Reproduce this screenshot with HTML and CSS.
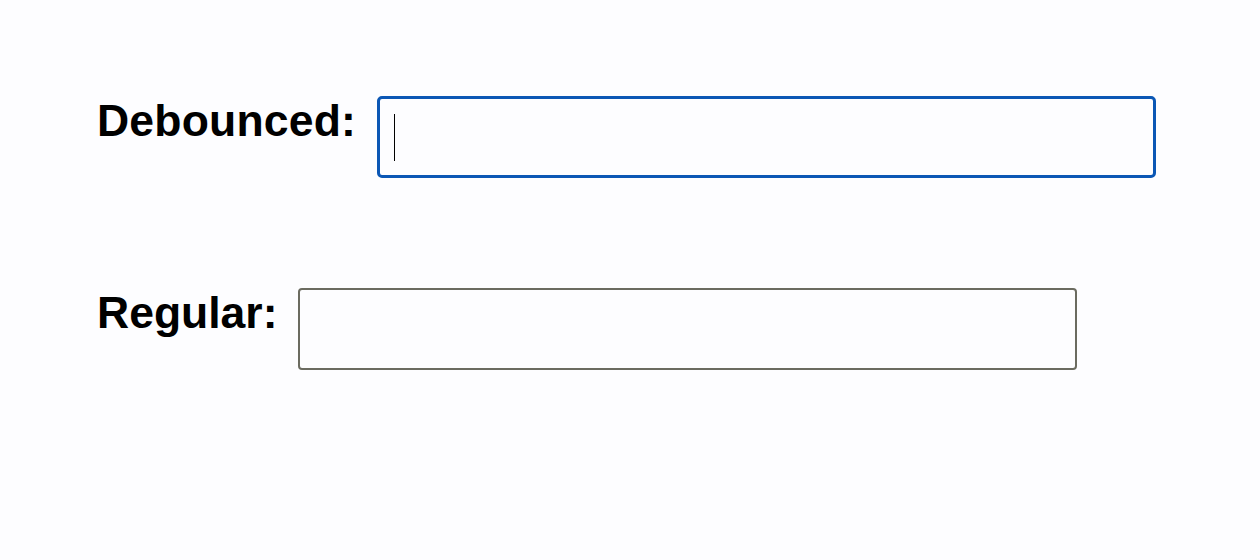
FILE: index.html
```html
<!DOCTYPE html>
<html>
<head>
<meta charset="utf-8">
<link rel="stylesheet" href="styles.css">
</head>
<body>
<div class="form">
  <div class="row">
    <label class="label">Debounced:</label>
    <div class="field focused"><span class="caret"></span></div>
  </div>
  <div class="row row2">
    <label class="label">Regular:</label>
    <div class="field"></div>
  </div>
</div>
</body>
</html>
```
FILE: styles.css
```css
html, body {
  margin: 0;
  padding: 0;
  background: #fdfdff;
}
.form {
  padding: 96px 0 0 97px;
  display: flex;
  flex-direction: column;
  gap: 110px;
}
.row {
  display: flex;
  align-items: flex-start;
  gap: 21px;
}
.row2 {
  gap: 20px;
}
.row2 .label {
  letter-spacing: 0;
}
.label {
  font-family: "Liberation Sans", Arial, sans-serif;
  font-weight: bold;
  font-size: 44.5px;
  line-height: 50px;
  color: #000;
  letter-spacing: 0.2px;
}
.field {
  box-sizing: border-box;
  width: 779px;
  height: 82px;
  border: 2px solid #6b6b60;
  border-radius: 4px;
  background: #fdfdff;
  display: flex;
  align-items: center;
  padding-left: 14px;
}
.field.focused {
  border: 3px solid #0b57b5;
  border-radius: 5px;
}
.caret {
  display: block;
  width: 1px;
  height: 47px;
  background: #000;
}
```
